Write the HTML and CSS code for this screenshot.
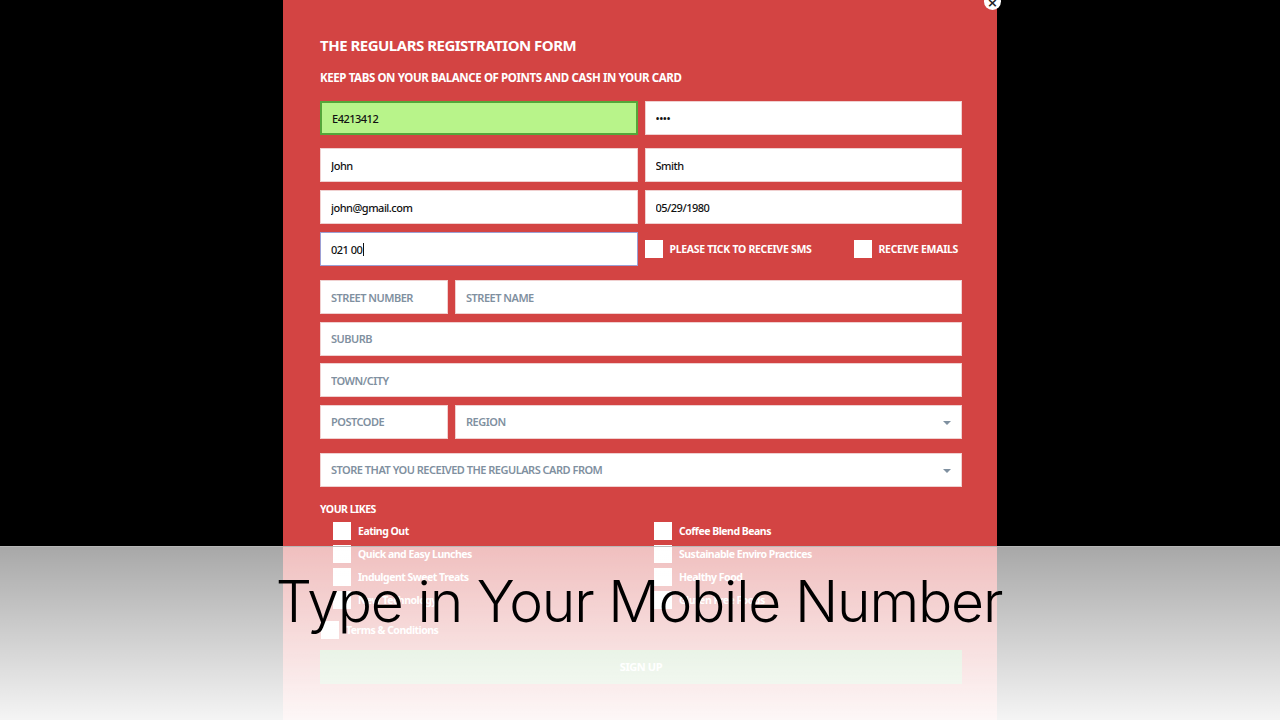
FILE: index.html
```html
<!DOCTYPE html>
<html lang="en">
<head>
    <meta charset="UTF-8">
    <meta name="viewport" content="width=device-width, initial-scale=1.0">
    <title>The Regulars Registration</title>
    <link rel="stylesheet" href="styles.css">
</head>
<body>
    <div class="modal">
        <span class="close">&#215;</span>
        <form class="form">
            <h1 class="title">THE REGULARS REGISTRATION FORM</h1>
            <p class="subtitle">KEEP TABS ON YOUR BALANCE OF POINTS AND CASH IN YOUR CARD</p>

            <div class="row two first">
                <input class="field valid" type="text" value="E4213412">
                <input class="field" type="password" value="1234">
            </div>
            <div class="row two">
                <input class="field" type="text" value="John">
                <input class="field" type="text" value="Smith">
            </div>
            <div class="row two">
                <input class="field" type="text" value="john@gmail.com">
                <input class="field" type="text" value="05/29/1980">
            </div>
            <div class="row two">
                <div class="field focus">021 00<span class="cursor"></span></div>
                <div class="opts">
                    <label class="opt"><span class="box"></span>PLEASE TICK TO RECEIVE SMS</label>
                    <label class="opt"><span class="box"></span>RECEIVE EMAILS</label>
                </div>
            </div>

            <div class="row split group">
                <input class="field" type="text" placeholder="STREET NUMBER">
                <input class="field" type="text" placeholder="STREET NAME">
            </div>
            <div class="row">
                <input class="field" type="text" placeholder="SUBURB">
            </div>
            <div class="row">
                <input class="field" type="text" placeholder="TOWN/CITY">
            </div>
            <div class="row split">
                <input class="field" type="text" placeholder="POSTCODE">
                <div class="field select">REGION</div>
            </div>
            <div class="row group">
                <div class="field select">STORE THAT YOU RECEIVED THE REGULARS CARD FROM</div>
            </div>

            <h2 class="likes-title">YOUR LIKES</h2>
            <div class="likes">
                <label class="like"><span class="box"></span>Eating Out</label>
                <label class="like"><span class="box"></span>Coffee Blend Beans</label>
                <label class="like"><span class="box"></span>Quick and Easy Lunches</label>
                <label class="like"><span class="box"></span>Sustainable Enviro Practices</label>
                <label class="like"><span class="box"></span>Indulgent Sweet Treats</label>
                <label class="like"><span class="box"></span>Healthy Food</label>
                <label class="like"><span class="box"></span>New Technology</label>
                <label class="like"><span class="box"></span>Gluten Free Foods</label>
            </div>
            <label class="like terms"><span class="box"></span>Terms &amp; Conditions</label>
            <button class="signup" type="button">SIGN UP</button>
        </form>
    </div>

    <div class="caption">
        <p>Type in Your Mobile Number</p>
    </div>
</body>
</html>
```

FILE: styles.css
```css
body {
    margin: 0;
    height: 720px;
    background: #000;
    overflow: hidden;
    font-family: "Noto Sans", "DejaVu Sans Condensed", sans-serif;
}
.modal {
    position: relative;
    width: 714px;
    height: 720px;
    margin-left: 283px;
    background: #d34443;
    box-sizing: border-box;
    padding: 0 35px 0 37px;
}
.close {
    position: absolute;
    top: -7px;
    right: -4px;
    width: 17px;
    height: 17px;
    border-radius: 50%;
    background: #fff;
    color: #222;
    font: bold 13px/19px "DejaVu Sans", sans-serif;
    text-align: center;
}
.form {
    padding-top: 36px;
}
.title {
    margin: 0;
    color: #fff;
    font-size: 15px;
    line-height: 18px;
    font-weight: bold;
    letter-spacing: -0.5px;
}
.subtitle {
    margin: 17px 0 0;
    color: #fff;
    font-size: 11.5px;
    line-height: 14px;
    font-weight: bold;
    letter-spacing: -0.4px;
}
.row {
    display: grid;
    gap: 7px;
    margin-top: 7.5px;
}
.row.two {
    grid-template-columns: minmax(0, 1fr) minmax(0, 1fr);
    margin-top: 8px;
}
.row.split {
    grid-template-columns: 128px minmax(0, 1fr);
}
.row.first {
    margin-top: 16px;
    margin-bottom: 13px;
}
.row.group {
    margin-top: 14px;
}
.field {
    display: flex;
    align-items: center;
    box-sizing: border-box;
    width: 100%;
    height: 34px;
    margin: 0;
    padding: 0 10px;
    border: 1px solid #f0d0d0;
    background: #fff;
    color: #111;
    font-family: inherit;
    font-size: 11px;
    font-weight: 500;
    letter-spacing: -0.5px;
    outline: none;
}
.field::placeholder {
    color: #7f90a0;
    font-weight: 600;
    opacity: 1;
}
.field.valid {
    background: #b8f48a;
    border: 2px solid #55a63a;
}
.field.focus {
    border: 1px solid #9c9fd4;
}
.cursor {
    display: inline-block;
    width: 1px;
    height: 13px;
    margin-left: 1px;
    background: #111;
}
.field.select {
    position: relative;
    color: #7f90a0;
    font-weight: 600;
}
.field.select::after {
    content: "";
    position: absolute;
    right: 10px;
    top: 15px;
    border: 4px solid transparent;
    border-top: 4px solid #7f90a0;
}
.opts {
    display: flex;
    justify-content: space-between;
    align-items: center;
    padding-right: 4px;
}
.opt {
    display: flex;
    align-items: center;
    gap: 7px;
    color: #fff;
    font-size: 10.5px;
    font-weight: bold;
    letter-spacing: -0.3px;
    white-space: nowrap;
}
.box {
    display: inline-block;
    width: 18px;
    height: 18px;
    background: #fff;
    flex: none;
}
.likes-title {
    margin: 15px 0 0;
    color: #fff;
    font-size: 10.5px;
    line-height: 14px;
    font-weight: bold;
    letter-spacing: -0.5px;
}
.likes {
    display: grid;
    grid-template-columns: 321px 1fr;
    row-gap: 5px;
    padding-left: 13px;
    margin-top: 6px;
}
.like {
    display: flex;
    align-items: center;
    gap: 7px;
    color: #fff;
    font-size: 10.5px;
    font-weight: bold;
    letter-spacing: -0.5px;
    white-space: nowrap;
}
.terms {
    margin: 12px 0 0 1px;
}
.signup {
    display: block;
    width: 100%;
    height: 34px;
    margin-top: 11px;
    border: none;
    background: #7cb86c;
    color: #fff;
    font-family: inherit;
    font-size: 11px;
    font-weight: bold;
    letter-spacing: -0.4px;
}
.caption {
    position: absolute;
    left: 0;
    right: 0;
    top: 546px;
    height: 174px;
    border-top: 1px solid rgba(120, 120, 120, 0.5);
    background: linear-gradient(rgba(255, 255, 255, 0.66), rgba(255, 255, 255, 0.96));
    text-align: center;
}
.caption p {
    margin: 20px 0 0 -2px;
    color: #000;
    font-family: Inter, "Open Sans", sans-serif;
    font-weight: 300;
    font-size: 57px;
    line-height: 70px;
    letter-spacing: -1.2px;
}
```
